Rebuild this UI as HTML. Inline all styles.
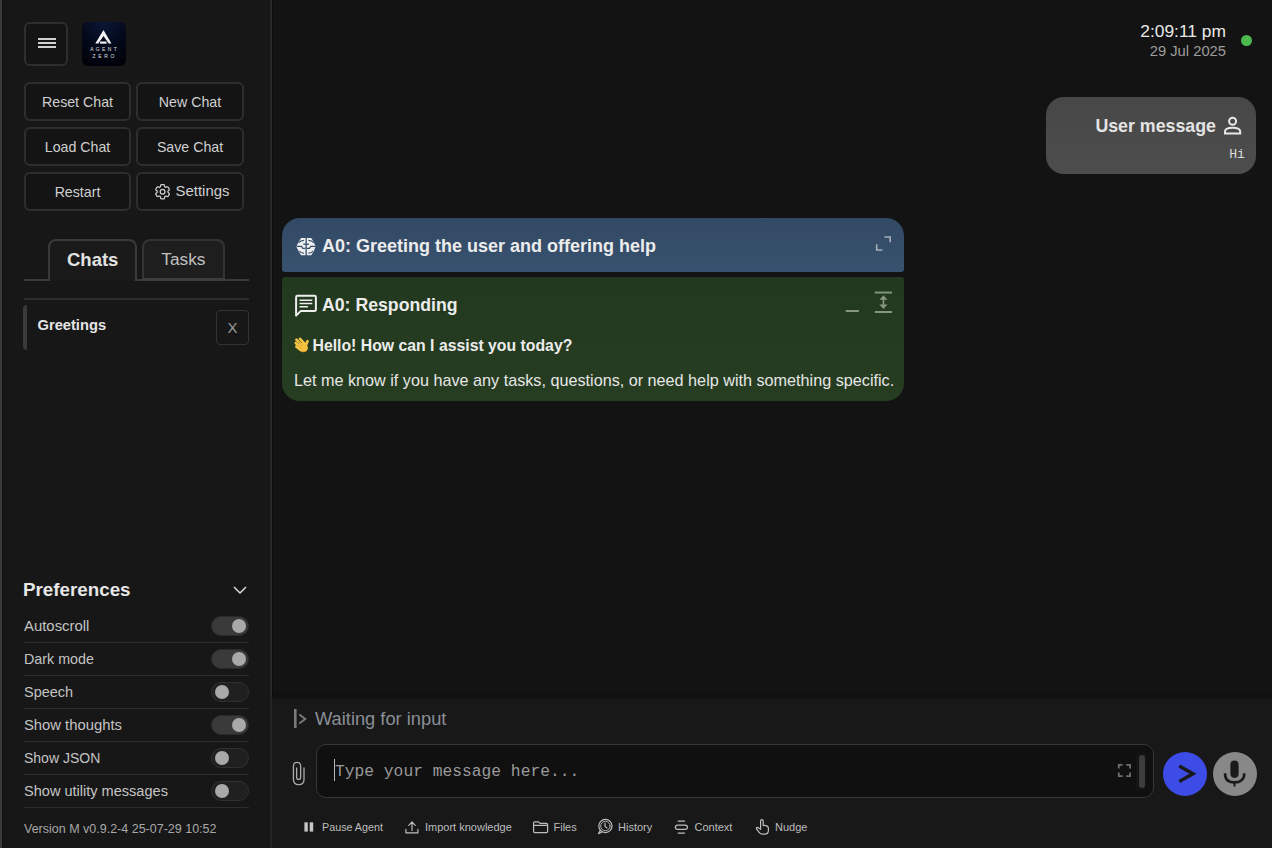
<!DOCTYPE html>
<html><head><meta charset="utf-8">
<style>
*{box-sizing:border-box;margin:0;padding:0}
html,body{width:1272px;height:848px;overflow:hidden;background:#131313;font-family:"Liberation Sans",sans-serif;color:#e0e0e0}
.a{position:absolute}
.t{position:absolute;white-space:nowrap;line-height:1}
#side{left:0;top:0;width:272px;height:848px;background:#171717;border-left:2px solid #3a3a3a;border-right:2px solid #282828}
.btn{position:absolute;border:2px solid #2e2e2e;border-radius:6px;background:#141414;color:#cfcfcf;font-size:14.2px;display:flex;align-items:center;justify-content:center}
.sep{position:absolute;left:24px;width:225px;height:1px;background:#2c2c2c}
.lbl{position:absolute;left:24px;font-size:14.7px;color:#c4c4c4;line-height:1;white-space:nowrap}
.tog{position:absolute;left:211px;width:38px;height:20px;border-radius:10px;background:#202020;border:1.5px solid #303030}
.tog.on{background:#3a3a3a;border-color:#2a2a2a}
.knob{position:absolute;top:1.5px;width:14px;height:14px;border-radius:50%;background:#a9a9a9}
.tog.on .knob{left:19.5px}
.tog .knob{left:2.5px}
.tb{position:absolute;top:822px;font-size:11px;color:#bdbdbd;line-height:1;white-space:nowrap}
</style></head><body>

<!-- SIDEBAR -->
<div id="side" class="a"></div>
<div class="a" style="left:2px;top:0;width:1px;height:848px;background:#121212"></div>
<div class="a" style="left:268.5px;top:0;width:1.5px;height:848px;background:#151515"></div>
<div class="a" style="left:272px;top:0;width:1px;height:848px;background:#0d0d0d"></div>
<div class="a" style="left:24px;top:22px;width:44px;height:44px;border:2px solid #2e2e2e;border-radius:6px;background:#141414"></div>
<div class="a" style="left:38px;top:38px;width:18px;height:2px;background:#d0d0d0"></div>
<div class="a" style="left:38px;top:42px;width:18px;height:2px;background:#d0d0d0"></div>
<div class="a" style="left:38px;top:46px;width:18px;height:2px;background:#d0d0d0"></div>
<div class="a" style="left:82px;top:22px;width:44px;height:44px;border-radius:6px;background:radial-gradient(ellipse 90% 100% at 50% 0%,#0a1838 0%,#040a1c 55%,#01030b 100%)"></div>

<div class="btn" style="left:24px;top:82px;width:107px;height:39px">Reset Chat</div>
<div class="btn" style="left:136px;top:82px;width:108px;height:39px">New Chat</div>
<div class="btn" style="left:24px;top:127px;width:107px;height:39px">Load Chat</div>
<div class="btn" style="left:136px;top:127px;width:108px;height:39px">Save Chat</div>
<div class="btn" style="left:24px;top:172px;width:107px;height:39px">Restart</div>
<div class="btn" style="left:136px;top:172px;width:108px;height:39px"></div>
<div class="t" style="left:175.5px;top:184.3px;font-size:14.95px;color:#cfcfcf">Settings</div>

<!-- tabs -->
<div class="a" style="left:24px;top:279px;width:225px;height:2px;background:#3a3a3a"></div>
<div class="a" style="left:48px;top:239px;width:89px;height:42px;border:2px solid #3a3a3a;border-bottom:none;border-radius:8px 8px 0 0;background:#1a1a1a"></div>
<div class="a" style="left:142px;top:239px;width:83px;height:42px;border:2px solid #333;border-bottom:none;border-radius:8px 8px 0 0;background:#1e1e1e"></div>
<div class="a" style="left:142px;top:278.3px;width:83px;height:2.7px;background:#3c3c3c"></div>
<div class="t" style="left:67px;top:250.6px;font-size:18.5px;font-weight:bold;color:#e2e2e2">Chats</div>
<div class="t" style="left:161.3px;top:251.3px;font-size:17.3px;color:#c0c0c0">Tasks</div>

<div class="sep" style="top:298px;height:2px"></div>
<div class="a" style="left:23.3px;top:305.2px;width:3.8px;height:44.8px;border-radius:4px 0 0 4px;background:#3a3a3a"></div>
<div class="t" style="left:37.5px;top:317.5px;font-size:14.7px;font-weight:bold;color:#e6e6e6">Greetings</div>
<div class="a" style="left:216px;top:310px;width:33px;height:35px;border:1px solid #333;border-radius:4px;color:#9a9a9a;font-size:15px;display:flex;align-items:center;justify-content:center">X</div>

<!-- preferences -->
<div class="t" style="left:23px;top:581px;font-size:18.8px;font-weight:bold;color:#e6e6e6">Preferences</div>
<svg class="a" style="left:232px;top:584px" width="16" height="12"><path d="M2 3 L8 9 L14 3" fill="none" stroke="#dcdcdc" stroke-width="1.5"/></svg>

<div class="lbl" style="top:618.69px;font-size:14.9px">Autoscroll</div>
<div class="tog on" style="top:616px"><div class="knob"></div></div>
<div class="sep" style="top:642px"></div>
<div class="lbl" style="top:652.20px;font-size:14.3px">Dark mode</div>
<div class="tog on" style="top:649px"><div class="knob"></div></div>
<div class="sep" style="top:675px"></div>
<div class="lbl" style="top:685.07px;font-size:14.45px">Speech</div>
<div class="tog" style="top:682px"><div class="knob"></div></div>
<div class="sep" style="top:708px"></div>
<div class="lbl" style="top:717.77px;font-size:14.8px">Show thoughts</div>
<div class="tog on" style="top:715px"><div class="knob"></div></div>
<div class="sep" style="top:741px"></div>
<div class="lbl" style="top:751.45px;font-size:14.0px">Show JSON</div>
<div class="tog" style="top:748px"><div class="knob"></div></div>
<div class="sep" style="top:774px"></div>
<div class="lbl" style="top:783.98px;font-size:14.55px">Show utility messages</div>
<div class="tog" style="top:781px"><div class="knob"></div></div>
<div class="sep" style="top:807px"></div>
<div class="t" style="left:24px;top:822.5px;font-size:12.5px;color:#a8a8a8">Version M v0.9.2-4 25-07-29 10:52</div>

<!-- MAIN -->
<div class="t" style="right:46px;top:23px;font-size:17.4px;color:#e8e8e8">2:09:11 pm</div>
<div class="t" style="right:46px;top:43.7px;font-size:14.75px;color:#9c9c9c">29 Jul 2025</div>
<div class="a" style="left:1241px;top:35px;width:11px;height:11px;border-radius:50%;background:#4cba4f"></div>

<div class="a" style="left:1046px;top:97px;width:210px;height:76.5px;border-radius:18px;background:linear-gradient(180deg,#474747,#4d4d4d)"></div>
<div class="t" style="right:56px;top:117.5px;font-size:17.8px;font-weight:bold;color:#e4e4e4">User message</div>
<div class="t" style="right:27px;top:148px;font-family:'Liberation Mono',monospace;font-size:13.2px;color:#dcdcdc">Hi</div>

<div class="a" style="left:282px;top:218px;width:622px;height:54px;border-radius:18px 18px 3px 3px;background:linear-gradient(180deg,#324964,#38526f)"></div>
<div class="t" style="left:322px;top:237px;font-size:18px;font-weight:bold;color:#ececec">A0: Greeting the user and offering help</div>

<div class="a" style="left:282px;top:277px;width:622px;height:124px;border-radius:3px 3px 18px 18px;background:linear-gradient(180deg,#22391f,#263d22)"></div>
<div class="t" style="left:322px;top:297.3px;font-size:17.7px;font-weight:bold;color:#ececec">A0: Responding</div>
<div class="t" style="left:312.5px;top:338px;font-size:15.8px;font-weight:bold;color:#ececec">Hello! How can I assist you today?</div>
<div class="t" style="left:294px;top:371.5px;font-size:16.2px;color:#e6e6e6">Let me know if you have any tasks, questions, or need help with something specific.</div>

<!-- bottom -->
<div class="a" style="left:272px;top:697px;width:1000px;height:151px;background:linear-gradient(180deg,#121212 0px,#181818 4px);box-shadow:0 -2px 5px rgba(0,0,0,0.18)"></div>
<div class="t" style="left:315px;top:709.5px;font-size:18.3px;color:#8a8f96">Waiting for input</div>
<div class="a" style="left:316px;top:744px;width:838px;height:54px;border:1.5px solid #363636;border-radius:10px;background:#101010"></div>
<div class="a" style="left:333.5px;top:759px;width:1px;height:22px;background:#b8b8b8"></div>
<div class="t" style="left:335px;top:764px;font-family:'Liberation Mono',monospace;font-size:16.3px;color:#9a9a9a">Type your message here...</div>
<div class="a" style="left:1136px;top:752px;width:10px;height:38px;background:#141414"></div>
<div class="a" style="left:1138.5px;top:754.5px;width:6px;height:33.5px;border-radius:3px;background:#3c3c3c"></div>
<div class="a" style="left:1163.3px;top:752px;width:44px;height:44px;border-radius:50%;background:#3d4ce6"></div>
<div class="a" style="left:1212.5px;top:752px;width:44px;height:44px;border-radius:50%;background:#888"></div>

<div class="tb" style="left:322px;font-size:10.75px;top:822.3px">Pause Agent</div>
<div class="tb" style="left:425px">Import knowledge</div>
<div class="tb" style="left:553.5px">Files</div>
<div class="tb" style="left:618px">History</div>
<div class="tb" style="left:694.5px">Context</div>
<div class="tb" style="left:775px">Nudge</div>

<svg class="a" style="left:0;top:0" width="1272" height="848" viewBox="0 0 1272 848">
 <!-- logo -->
 <g transform="translate(82,22)">
  <path d="M21.5 7.9 L29.4 21.5 L13.3 21.5 Z" fill="#f4f4f4"/>
  <path d="M21.5 14.1 L26.9 21.7 L16.1 21.7 Z" fill="#040a1a"/>
  <rect x="18.1" y="19.5" width="6.4" height="2.1" fill="#f4f4f4"/>
  <text x="21.4" y="28.8" font-family="Liberation Sans" font-size="4.9" fill="#e0e0e0" text-anchor="middle" textLength="26.5" lengthAdjust="spacing">AGENT</text>
  <text x="21.4" y="35.6" font-family="Liberation Sans" font-size="4.9" fill="#e0e0e0" text-anchor="middle" textLength="22" lengthAdjust="spacing">ZERO</text>
 </g>
 <!-- gear -->
 <g transform="translate(153.1,182.2) scale(0.79)" fill="none" stroke="#cfcfcf" stroke-width="1.6" stroke-linecap="round" stroke-linejoin="round">
  <path d="M9.594 3.94c.09-.542.56-.94 1.11-.94h2.593c.55 0 1.02.398 1.11.94l.213 1.281c.063.374.313.686.645.87.074.04.147.083.22.127.325.196.72.257 1.075.124l1.217-.456a1.125 1.125 0 0 1 1.37.49l1.296 2.247a1.125 1.125 0 0 1-.26 1.431l-1.003.827c-.293.241-.438.613-.43.992a7.723 7.723 0 0 1 0 .255c-.008.378.137.75.43.991l1.004.827c.424.35.534.955.26 1.43l-1.298 2.247a1.125 1.125 0 0 1-1.369.491l-1.217-.456c-.355-.133-.75-.072-1.076.124a6.470 6.470 0 0 1-.22.128c-.331.183-.581.495-.644.869l-.213 1.281c-.09.543-.56.94-1.110.94h-2.594c-.55 0-1.019-.398-1.11-.94l-.213-1.281c-.062-.374-.312-.686-.644-.87a6.520 6.520 0 0 1-.22-.127c-.325-.196-.72-.257-1.076-.124l-1.217.456a1.125 1.125 0 0 1-1.369-.49l-1.297-2.247a1.125 1.125 0 0 1 .26-1.431l1.004-.827c.292-.24.437-.613.43-.991a6.932 6.932 0 0 1 0-.255c.007-.38-.138-.751-.43-.992l-1.004-.827a1.125 1.125 0 0 1-.26-1.430l1.297-2.247a1.125 1.125 0 0 1 1.37-.491l1.216.456c.356.133.751.072 1.076-.124.072-.044.146-.086.22-.128.332-.183.582-.495.644-.869l.214-1.280Z"/>
  <circle cx="12" cy="12" r="3"/>
 </g>
 <!-- brain -->
 <path d="M301.1 238.1 H311.2 L313.7 242 L315.6 246.6 L313.7 251.2 L311.2 255.3 H301.1 L298.6 251.2 L296.3 246.6 L298.6 242 Z" fill="#efefef"/>
 <g fill="none" stroke="#354f6b" stroke-width="1.3">
  <path d="M306.15 237.5 V256"/>
  <path d="M303.3 244.2 H309"/>
  <path d="M298.6 242.6 Q300.4 240.5 303.9 240.4"/>
  <path d="M296.5 246.3 H301.5 L302.8 248.3 H305.5"/>
  <path d="M299.2 251 Q300.8 253.3 303.9 253.2"/>
  <path d="M313.7 242.6 Q311.9 240.5 308.4 240.4"/>
  <path d="M315.8 246.3 H310.8 L309.5 248.3 H306.8"/>
  <path d="M313.1 251 Q311.5 253.3 308.4 253.2"/>
 </g>
 <!-- expand corners -->
 <g fill="none" stroke="#a6afba" stroke-width="1.6">
  <path d="M884.4 237 H890.2 V242.3"/>
  <path d="M876.7 244.3 V250 H882.4"/>
 </g>
 <!-- chat icon -->
 <g fill="none" stroke="#eeeeee" stroke-width="2" stroke-linejoin="round">
  <path d="M296.1 315.6 V297.2 Q296.1 295.8 297.5 295.8 H314.5 Q315.9 295.8 315.9 297.2 V309.7 Q315.9 311.1 314.5 311.1 H300.6 Z"/>
  <path d="M299.5 300.3 H312.3 M299.5 303.5 H312.3 M299.5 306.8 H307.9" stroke-width="1.6"/>
 </g>
 <!-- minimize / vertical expand -->
 <g fill="#879683">
  <rect x="845.8" y="310" width="13.1" height="2"/>
  <rect x="874.8" y="291.6" width="17.2" height="1.9"/>
  <rect x="874.8" y="311" width="17.2" height="2"/>
 </g>
 <g fill="#879683">
  <rect x="882.6" y="298" width="1.7" height="9"/>
  <path d="M879.4 299.8 L883.45 295.2 L887.5 299.8 Z"/>
  <path d="M879.4 304.5 L883.45 309.1 L887.5 304.5 Z"/>
 </g>
 <!-- person -->
 <g fill="none" stroke="#e8e8e8" stroke-width="2">
  <circle cx="1232.6" cy="121.3" r="3.5"/>
  <path d="M1225 133.4 V131.6 C1225 128.6 1228.5 127.8 1232.6 127.8 C1236.7 127.8 1240.2 128.6 1240.2 131.6 V133.4 Z"/>
 </g>
 <!-- wave hand -->
 <g stroke="#f6c644" stroke-linecap="round" fill="none">
  <path d="M296.4 339.6 L302.4 345.6" stroke-width="2.6"/>
  <path d="M300 338.8 L305 344.2" stroke-width="2.6"/>
  <path d="M295.8 343 L301.4 348.2" stroke-width="2.6"/>
  <path d="M296.2 346.5 L300.6 350.2" stroke-width="2.4"/>
  <path d="M307.5 341.2 L305.6 346" stroke-width="2.6"/>
 </g>
 <ellipse cx="303.3" cy="347.3" rx="4.4" ry="4.9" transform="rotate(-40 303.3 347.3)" fill="#f5c240"/>
 <path d="M298.3 341.6 L302.8 346 M297.8 345.2 L301.8 348.8" stroke="#c9962a" stroke-width="0.6" fill="none"/>
 <path d="M306.5 350.5 Q304.5 352.5 301.5 351.5" stroke="#e59a22" stroke-width="1" fill="none"/>
 <!-- waiting -->
 <rect x="294" y="709" width="2.6" height="19" fill="#7a7a7a"/>
 <path d="M299.3 714.5 L305.2 719 L299.3 723.5" fill="none" stroke="#7a7a7a" stroke-width="2"/>
 <!-- paperclip -->
 <path d="M304 767.6 V779.6 Q304 784.7 298.7 784.7 Q293.45 784.7 293.45 779.6 V766.3 Q293.45 762.35 297.05 762.35 Q300.65 762.35 300.65 766.3 V777.2 Q300.65 779.4 298.65 779.4 Q296.65 779.4 296.65 777.2 V767.6" fill="none" stroke="#ababab" stroke-width="1.3"/>
 <!-- fullscreen -->
 <g fill="none" stroke="#6e6e6e" stroke-width="1.8">
  <path d="M1118.8 768.5 V764.8 H1122.6"/>
  <path d="M1126.2 764.8 H1130.1 V768.5"/>
  <path d="M1118.8 772.4 V776.1 H1122.6"/>
  <path d="M1126.2 776.1 H1130.1 V772.4"/>
 </g>
 <!-- send arrow -->
 <path d="M1179.3 766 L1193 773.7 L1179.3 781.4" fill="none" stroke="#191919" stroke-width="3.4"/>
 <!-- mic -->
 <rect x="1230.4" y="760.6" width="8.2" height="17.3" rx="4.1" fill="#1a1a1a"/>
 <path d="M1225 773.2 C1225 779.6 1229 782.4 1234.5 782.4 C1240 782.4 1244.3 779.6 1244.3 773.2" fill="none" stroke="#1a1a1a" stroke-width="2.6"/>
 <rect x="1233.5" y="782" width="2" height="4.5" fill="#1a1a1a"/>
 <!-- toolbar icons -->
 <rect x="304.4" y="822.3" width="3.4" height="9.3" fill="#c6c6c6"/>
 <rect x="309.7" y="822.3" width="3.5" height="9.3" fill="#c6c6c6"/>
 <g fill="none" stroke="#bdbdbd" stroke-width="1.2" stroke-linejoin="round" stroke-linecap="round">
  <path d="M412 830.6 V822.4 M408.8 825.3 L412 822 L415.2 825.3 M405.9 829.3 V832.8 H417.9 V829.3"/>
  <path d="M533.6 823 Q533.6 821.8 534.8 821.8 H538.5 L540 823.4 H546.6 Q547.6 823.4 547.6 824.5 V831.6 Q547.6 832.6 546.6 832.6 H534.8 Q533.6 832.6 533.6 831.5 Z M533.6 825.3 H547.6"/>
  <circle cx="605.4" cy="826" r="6.6"/>
  <circle cx="605.4" cy="826" r="4.7" stroke-width="0.9"/>
  <path d="M600.2 830.6 L598.5 833.6 L601.6 832.3"/>
  <path d="M605 823.2 V826.4 L607 828"/>
  <path d="M678.2 821.2 H684.6 M678.2 833.1 H684.6"/>
  <rect x="675.4" y="825.2" width="12" height="4.2" rx="2.1"/>
  <path d="M760.6 828.4 V821 Q760.6 819.6 761.9 819.6 Q763.2 819.6 763.2 821 V825.6 Q765.4 825 766.4 825.9 Q768.4 826.2 768.4 828.6 V830.6 Q768.4 834.2 764.6 834.2 H762.4 Q760.6 834.2 759.1 832.3 L756.5 828.9 Q756 827.6 757.4 827.3 Q758.6 827.4 760.6 829.4"/>
 </g>
</svg>
</body></html>
